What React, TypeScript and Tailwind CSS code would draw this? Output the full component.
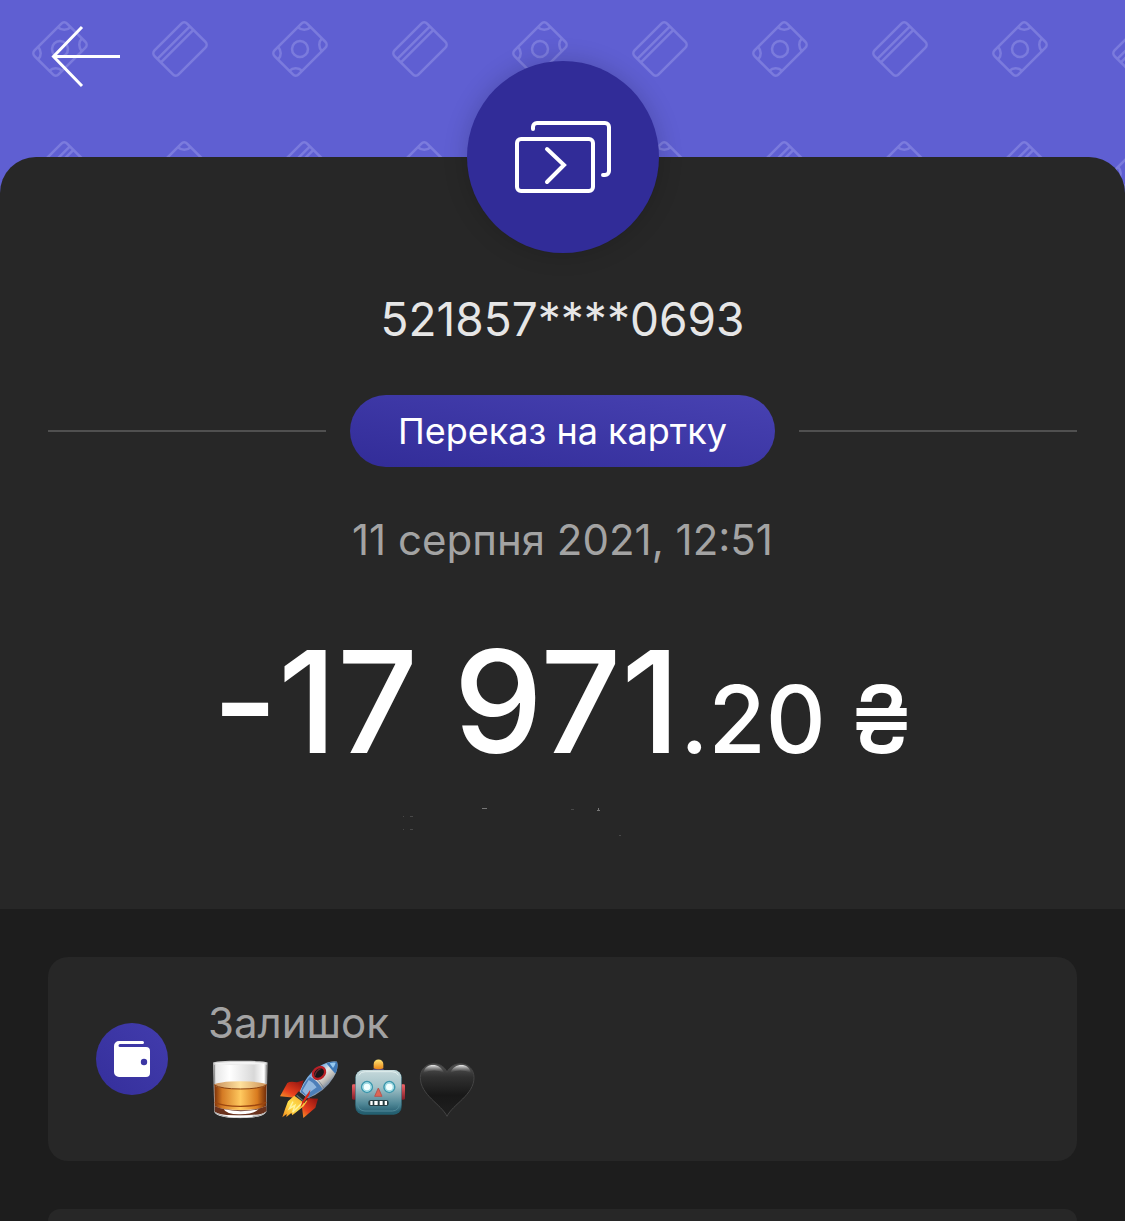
import type { ReactNode } from "react";

function HeaderPattern() {
  return (
    <svg className="absolute inset-0 h-full w-full" aria-hidden="true">
      <defs>
        <g id="bill" fill="none" stroke="#7b7bdd" strokeWidth="2.5" transform="rotate(-45)">
          <rect x="-23" y="-17" width="46" height="34" rx="4" />
          <circle r="8" />
          <path d="M-14 -17a9 9 0 0 1 -9 9M14 -17a9 9 0 0 0 9 9M-14 17a9 9 0 0 0 -9 -9M14 17a9 9 0 0 1 9 -9" />
        </g>
        <g id="card" fill="none" stroke="#7b7bdd" strokeWidth="2.5" transform="rotate(-45)">
          <rect x="-23" y="-17" width="46" height="34" rx="4" />
          <path d="M-23 -9H23M-23 -4H23" />
        </g>
        <pattern id="money" width="240" height="240" patternUnits="userSpaceOnUse">
          <use href="#bill" x="60" y="49" />
          <use href="#card" x="180" y="49" />
          <use href="#card" x="60" y="169" />
          <use href="#bill" x="180" y="169" />
        </pattern>
      </defs>
      <rect width="100%" height="100%" fill="url(#money)" />
    </svg>
  );
}

function TransferIcon() {
  return (
    <svg viewBox="0 0 96 72" className="h-[72px] w-24" fill="none" stroke="white" strokeWidth="4" strokeLinecap="round" strokeLinejoin="round" aria-hidden="true">
      <rect x="2" y="18" width="76" height="52" rx="4" />
      <path d="M18 8V6a4 4 0 0 1 4-4h68a4 4 0 0 1 4 4v44a4 4 0 0 1-4 4h-2" />
      <path d="M32 28l17 16-17 17" strokeLinejoin="miter" />
    </svg>
  );
}

function WalletIcon() {
  return (
    <svg viewBox="0 0 36 36" className="size-9" aria-hidden="true">
      <path fill="white" d="M5 0H28.500a1.500 1.500 0 0 1 0 3H6a1.500 1.500 0 0 0 0 3H32a4 4 0 0 1 4 4V32a4 4 0 0 1-4 4H5a5 5 0 0 1-5-5V5a5 5 0 0 1 5-5Z" />
      <circle cx="30" cy="21" r="3.200" fill="#3b36a4" />
    </svg>
  );
}

function Emoji({ label, viewBox, children }: { label: string; viewBox: string; children: ReactNode }) {
  return (
    <svg role="img" aria-label={label} viewBox={viewBox} className="size-16">
      {children}
    </svg>
  );
}

function Whisky() {
  return (
    <Emoji label="Віскі" viewBox="24 30 192 192">
      <defs>
        <linearGradient id="glass" x1="0" x2="1">
          <stop offset="0" stopColor="#aaa" />
          <stop offset="0.06" stopColor="#e8e8e8" />
          <stop offset="0.3" stopColor="#fff" />
          <stop offset="0.75" stopColor="#d8d8d8" />
          <stop offset="0.93" stopColor="#fff" />
          <stop offset="1" stopColor="#999" />
        </linearGradient>
        <linearGradient id="drink" x1="0" x2="1">
          <stop offset="0" stopColor="#7c3108" />
          <stop offset="0.15" stopColor="#d47a24" />
          <stop offset="0.5" stopColor="#ffc95f" />
          <stop offset="0.82" stopColor="#d97b1f" />
          <stop offset="1" stopColor="#702a08" />
        </linearGradient>
        <linearGradient id="drinkTop" x1="0" x2="1">
          <stop offset="0" stopColor="#c9905d" />
          <stop offset="0.5" stopColor="#ffe19c" />
          <stop offset="1" stopColor="#cd9259" />
        </linearGradient>
      </defs>
      <path d="M39 53L43 201Q52 219 121 219T199 201L203 53Z" fill="url(#glass)" />
      <ellipse cx="121" cy="53" rx="82" ry="6" fill="#cfcfcf" />
      <ellipse cx="121" cy="55" rx="77" ry="4" fill="#f4f4f4" />
      <path d="M43 60L44 119M199 60L198 119" stroke="#777" strokeWidth="2" />
      <path d="M43 118H200L198 183Q180 195 121 195T44 183Z" fill="url(#drink)" />
      <ellipse cx="121" cy="120" rx="78" ry="11" fill="url(#drinkTop)" />
      <path d="M43 120Q64 132 121 132T200 120" fill="none" stroke="#8a4011" strokeWidth="3" />
      <path d="M44 172Q70 184 121 184T199 172" fill="none" stroke="#9c4610" strokeWidth="4" />
      <path d="M44 183Q70 196 121 196T199 183V200Q185 211 121 211T44 200Z" fill="#6a321d" />
      <path d="M71 193Q121 204 176 193Q162 207 121 208T71 193Z" fill="#fff" />
      <path d="M43 200Q60 218 121 218T199 200" fill="none" stroke="#a9a9a9" strokeWidth="3" />
      <path d="M83 213Q121 218 158 213" fill="none" stroke="#fff" strokeWidth="4" />
    </Emoji>
  );
}

function Rocket() {
  return (
    <Emoji label="Ракета" viewBox="231 30 192 192">
      <defs>
        <linearGradient id="hull" x1="0.2" y1="0.2" x2="0.75" y2="0.8">
          <stop offset="0" stopColor="#3c78b8" />
          <stop offset="0.25" stopColor="#7fb1e2" />
          <stop offset="0.45" stopColor="#e8e8e6" />
          <stop offset="0.7" stopColor="#b9b8b4" />
          <stop offset="1" stopColor="#385f94" />
        </linearGradient>
        <linearGradient id="fin" x1="0" y1="1" x2="0.7" y2="0">
          <stop offset="0" stopColor="#f39a28" />
          <stop offset="0.4" stopColor="#e8401d" />
          <stop offset="1" stopColor="#9c1912" />
        </linearGradient>
        <linearGradient id="flame" x1="0" y1="1" x2="1" y2="0">
          <stop offset="0" stopColor="#f48a1b" />
          <stop offset="0.45" stopColor="#ffe14d" />
          <stop offset="1" stopColor="#f4a32b" />
        </linearGradient>
      </defs>
      <path d="M311 106L291 112Q270 108 262 114L240 154L284 158L302 136Z" fill="url(#fin)" />
      <path d="M325 160L354 161L346 188L310 219L306 188Z" fill="url(#fin)" />
      <path d="M282 153L264 169Q254 194 247 217L260 207L259 216L274 204L277 211L311 184L322 168L300 151Z" fill="url(#flame)" />
      <path d="M279 170L268 191L285 181L278 202L306 174" fill="none" stroke="#fff2a0" strokeWidth="4" />
      <path d="M299 141Q316 91 356 65Q385 47 411 50Q417 72 401 97Q375 141 323 160Z" fill="url(#hull)" />
      <path d="M379 55Q397 47 411 50Q416 66 406 86Q396 76 379 55Z" fill="#3f79b7" />
      <path d="M389 55Q400 51 407 53Q404 63 399 69Z" fill="#97caf0" />
      <path d="M330 95Q356 108 367 133L325 159L301 141Q311 113 330 95Z" fill="#4d7fb9" />
      <path d="M326 105Q342 113 350 127L318 150Q312 142 307 137Z" fill="#a8c9eb" opacity="0.75" />
      <path d="M339 94Q358 105 372 129" fill="none" stroke="#667482" strokeWidth="2" />
      <path d="M296 139L322 162L313 174L284 153Z" fill="#252a2b" />
      <path d="M290 151L310 168" stroke="#58706d" strokeWidth="4" />
      <path d="M331 134L328 150L301 188L307 169Z" fill="#d92817" />
      <ellipse cx="357" cy="84" rx="20" ry="16" transform="rotate(-42 357 84)" fill="#18171a" stroke="#b92026" strokeWidth="7" />
      <path d="M344 93Q349 75 362 71" fill="none" stroke="#6c2931" strokeWidth="4" />
    </Emoji>
  );
}

function Robot() {
  return (
    <Emoji label="Робот" viewBox="18 30 192 192">
      <defs>
        <linearGradient id="face" x2="0" y2="1">
          <stop offset="0" stopColor="#c6d9db" />
          <stop offset="0.4" stopColor="#a3c2c8" />
          <stop offset="0.8" stopColor="#4f8796" />
          <stop offset="1" stopColor="#285f72" />
        </linearGradient>
        <linearGradient id="bulb" x2="0" y2="1">
          <stop offset="0" stopColor="#ffe575" />
          <stop offset="1" stopColor="#e98415" />
        </linearGradient>
        <linearGradient id="ear" x2="0" y2="1">
          <stop offset="0" stopColor="#f16367" />
          <stop offset="1" stopColor="#821c27" />
        </linearGradient>
      </defs>
      <rect x="36" y="118" width="18" height="46" rx="4" fill="url(#ear)" />
      <rect x="177" y="118" width="18" height="46" rx="4" fill="url(#ear)" />
      <path d="M96 78Q98 68 115 68T134 78L129 83H101Z" fill="#5e4a78" />
      <path d="M101 70V57A14 13 0 0 1 130 57V70Q115 76 101 70Z" fill="url(#bulb)" />
      <rect x="46" y="75" width="139" height="134" rx="24" fill="#246071" />
      <rect x="47" y="75" width="137" height="127" rx="22" fill="url(#face)" />
      <path d="M57 91Q61 80 76 80H156Q171 80 175 91" fill="none" stroke="#e0eeee" strokeWidth="3" />
      <path d="M53 178Q55 197 75 198H157Q176 197 178 178" fill="none" stroke="#4f8a9a" strokeWidth="3" />
      <circle cx="81" cy="126" r="16" fill="#f1ffff" stroke="#3c98ad" strokeWidth="5" />
      <circle cx="148" cy="126" r="16" fill="#f1ffff" stroke="#3c98ad" strokeWidth="5" />
      <circle cx="81" cy="126" r="12" fill="none" stroke="#9ad7e1" strokeWidth="4" />
      <circle cx="148" cy="126" r="12" fill="none" stroke="#9ad7e1" strokeWidth="4" />
      <path d="M115 129L104 154H126Z" fill="#dd6655" stroke="#b65651" strokeWidth="3" strokeLinejoin="round" />
      <rect x="85" y="165" width="61" height="18" rx="8" fill="#263d42" />
      <path d="M91 168H98V180H91ZM103 168H113V180H103ZM119 168H128V180H119ZM134 168H141V180H134Z" fill="#fff" />
    </Emoji>
  );
}

function BlackHeart() {
  return (
    <Emoji label="Чорне серце" viewBox="225 30 192 192">
      <defs>
        <linearGradient id="heart" x2="0" y2="1">
          <stop offset="0" stopColor="#555" />
          <stop offset="0.25" stopColor="#303030" />
          <stop offset="0.6" stopColor="#181818" />
          <stop offset="1" stopColor="#202020" />
        </linearGradient>
        <linearGradient id="shine" x2="0" y2="1">
          <stop offset="0" stopColor="#eee" />
          <stop offset="1" stopColor="#777" stopOpacity="0" />
        </linearGradient>
      </defs>
      <path d="M321 214C304 178 241 150 241 98C241 48 306 43 321 82C337 43 402 48 402 98C402 150 338 178 321 214Z" fill="url(#heart)" stroke="#444" strokeWidth="3" />
      <path d="M250 84C256 51 301 53 312 83Q281 70 250 84Z" fill="url(#shine)" />
      <path d="M331 83C342 53 387 51 393 84Q362 70 331 83Z" fill="url(#shine)" />
    </Emoji>
  );
}

export default function App() {
  return (
    <main className="flex min-h-screen flex-col bg-[#1d1d1d] font-['Inter',sans-serif] text-white">
      <div className="relative bg-[#5f5fd2]">
        <HeaderPattern />
        <header className="relative h-[157px] px-12 pt-6">
          <button type="button" aria-label="Назад" className="block">
            <svg viewBox="0 0 76 66" className="h-[66px] w-[76px]" fill="none" stroke="white" strokeWidth="3" aria-hidden="true">
              <path d="M72 32.500H6M34 3L5.500 32.500L34 62" />
            </svg>
          </button>
        </header>

        <section className="relative flex flex-col items-center rounded-t-[36px] bg-[#272727] px-12 pb-[72px]">
          <div className="-mt-24 flex size-48 items-center justify-center rounded-full bg-[#312c98] shadow-[0_0_24px_rgba(0,0,0,0.18)]">
            <TransferIcon />
          </div>
          <h1 className="mt-[38px] text-[46px] leading-[56px] text-[#e6e6e6]">521857****0693</h1>

          <div className="mt-12 flex w-full items-center gap-6">
            <div className="h-0.5 flex-1 bg-[#505050]" />
            <div className="flex h-[72px] items-center rounded-full bg-linear-to-tr from-[#322c98] to-[#4842b2] px-12 text-[36px]">
              Переказ на картку
            </div>
            <div className="h-0.5 flex-1 bg-[#505050]" />
          </div>

          <p className="mt-12 text-[42px] leading-[50px] text-[#a3a3a3]">11 серпня 2021, 12:51</p>

          {/* calt off keeps the minus sign at its low position before a digit */}
          <p className="mt-16 text-[142px] leading-[144px] font-medium whitespace-nowrap [font-feature-settings:'calt'_0]">
            -17{"\u2005"}971<span className="text-[93px] leading-none">.20 ₴</span>
          </p>

          <svg viewBox="0 0 325 32" className="mt-8 h-8 w-[325px]" stroke="#777" aria-hidden="true">
            <path d="M82 3.500h5M197 5.500h3M198.500 3v2" />
            <path d="M3 11.500h1M10 11.500h3M3 24.500h1M10 24.500h3M171 4.500h3M219 30.500h2" stroke="#484848" />
          </svg>
        </section>
      </div>

      <section className="flex flex-1 flex-col gap-12 px-12 pt-12">
        <article className="flex items-center gap-10 rounded-[20px] bg-[#272727] px-12 py-[38px]">
          <div className="flex size-[72px] items-center justify-center rounded-full bg-linear-to-tr from-[#352f9b] to-[#423cad]">
            <WalletIcon />
          </div>
          <div>
            <h2 className="text-[42px] leading-[56px] text-[#a3a3a3]">Залишок</h2>
            <div className="flex h-[72px] items-center gap-[5px]">
              <Whisky />
              <Rocket />
              <Robot />
              <BlackHeart />
            </div>
          </div>
        </article>
        <div className="flex-1 rounded-t-[20px] bg-[#272727]" />
      </section>
    </main>
  );
}
